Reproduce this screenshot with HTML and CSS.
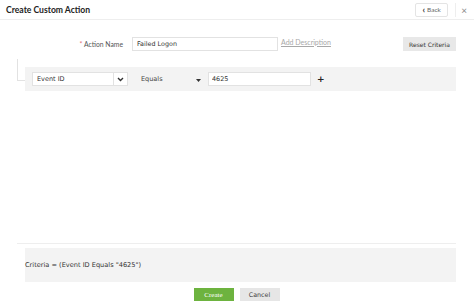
FILE: index.html
```
<!DOCTYPE html>
<html lang="en">
<head>
  <meta charset="UTF-8" />
  <title>Create Custom Action</title>
  <link rel="stylesheet" href="styles.css">
</head>
<body>
  <div class="page">
    <div class="header">
      <div class="title">Create Custom Action</div>
      <div class="header-actions">
        <button class="back-btn"><span class="chev">&#8249;</span> Back</button>
        <span class="divider"></span>
        <span class="close">&#215;</span>
      </div>
    </div>

    <div class="name-row">
      <label class="name-label"><span class="req">*</span> Action Name</label>
      <input class="name-input" type="text" value="Failed Logon" />
      <a class="add-desc" href="#">Add Description</a>
      <button class="reset-btn">Reset Criteria</button>
    </div>

    <div class="criteria">
      <div class="bracket"></div>
      <div class="crit-row">
        <div class="select">
          <span class="select-text">Event ID</span>
          <span class="select-arrow">
            <svg width="7" height="5" viewBox="0 0 7 5"><path d="M1 1 L3.5 3.5 L6 1" fill="none" stroke="#333" stroke-width="1.4"/></svg>
          </span>
        </div>
        <div class="op">
          <span>Equals</span>
          <svg width="5" height="3" viewBox="0 0 5 3"><path d="M0 0 L5 0 L2.5 3 Z" fill="#333"/></svg>
        </div>
        <input class="value-input" type="text" value="4625" />
        <span class="plus">+</span>
      </div>
    </div>

    <div class="summary">
      <div class="summary-box">Criteria = (Event ID Equals "4625")</div>
      <div class="buttons">
        <button class="create-btn">Create</button>
        <button class="cancel-btn">Cancel</button>
      </div>
    </div>
  </div>
</body>
</html>
```

FILE: styles.css
```
body {
  margin: 0;
  background: #fff;
  font-family: Lato, "Open Sans", sans-serif;
  color: #333;
}
.page {
  width: 474px;
  height: 306px;
  display: flex;
  flex-direction: column;
}

.header {
  height: 19px;
  border-bottom: 1px solid #eee;
  display: flex;
  align-items: center;
  justify-content: space-between;
  padding: 0 7px 0 6px;
}
.title {
  font-size: 8.6px;
  font-weight: bold;
  color: #222;
}
.header-actions {
  display: flex;
  align-items: center;
}
.back-btn {
  height: 14px;
  width: 33px;
  border: 1px solid #e4e4e4;
  border-radius: 2px;
  background: #fff;
  font-family: Lato, sans-serif;
  font-size: 6.5px;
  color: #666;
  padding: 0;
  display: flex;
  align-items: center;
  justify-content: center;
  gap: 2px;
}
.back-btn .chev {
  font-size: 9px;
  font-weight: bold;
  line-height: 1;
  color: #333;
  margin-top: -1px;
}
.divider {
  width: 1px;
  height: 14px;
  background: #eee;
  margin: 0 5px 0 7px;
}
.close {
  font-size: 10px;
  color: #888;
  line-height: 1;
}

.name-row {
  display: flex;
  align-items: center;
  margin-top: 17px;
  padding-right: 18px;
  height: 14px;
}
.name-label {
  width: 123px;
  text-align: right;
  font-size: 6.8px;
  color: #555;
}
.req {
  color: #e57373;
}
.name-input {
  margin-left: 9px;
  width: 146px;
  height: 14px;
  box-sizing: border-box;
  border: 1px solid #e2e2e2;
  padding: 0 4px;
  font-family: "DejaVu Sans", sans-serif;
  font-size: 6.4px;
  color: #333;
}
.add-desc {
  margin-left: 3px;
  font-size: 7px;
  color: #a8a8a8;
  text-decoration: underline;
  margin-top: -5px;
}
.reset-btn {
  margin-left: auto;
  width: 53px;
  height: 14px;
  border: none;
  background: #e8e8e8;
  font-family: "DejaVu Sans", sans-serif;
  font-size: 6px;
  color: #333;
  padding: 0;
}

.criteria {
  display: flex;
  align-items: flex-start;
  margin: 8px 18px 0 17px;
}
.bracket {
  width: 7px;
  height: 21px;
  border-left: 1px solid #e2e2e2;
  border-bottom: 1px solid #e2e2e2;
}
.crit-row {
  flex: 1;
  margin-top: 8px;
  height: 24px;
  background: #f3f3f3;
  display: flex;
  align-items: center;
  padding-left: 7px;
}
.select {
  width: 96px;
  height: 14px;
  box-sizing: border-box;
  border: 1px solid #e2e2e2;
  background: #fff;
  display: flex;
  align-items: center;
}
.select-text {
  flex: 1;
  padding-left: 4px;
  font-family: "DejaVu Sans", sans-serif;
  font-size: 6.5px;
  color: #333;
}
.select-arrow {
  width: 13px;
  height: 12px;
  border-left: 1px solid #e2e2e2;
  display: flex;
  align-items: center;
  justify-content: center;
}
.op {
  width: 60px;
  margin-left: 13px;
  display: flex;
  align-items: center;
  justify-content: space-between;
  font-family: "DejaVu Sans", sans-serif;
  font-size: 6.5px;
  color: #444;
}
.op svg {
  margin-top: 2px;
}
.value-input {
  margin-left: 7px;
  width: 103px;
  height: 14px;
  box-sizing: border-box;
  border: 1px solid #e2e2e2;
  padding: 0 3px;
  font-family: "DejaVu Sans", sans-serif;
  font-size: 6.4px;
  color: #333;
}
.plus {
  margin-left: 6px;
  font-family: "DejaVu Sans", sans-serif;
  font-size: 9px;
  font-weight: bold;
  color: #222;
}

.summary {
  margin-top: auto;
  padding: 0 18px 5px 17px;
}
.summary-box {
  border-top: 1px solid #eee;
  height: 39px;
  box-sizing: border-box;
  background: #f3f3f3;
  background-clip: content-box;
  padding: 4px 0 0 8px;
  display: flex;
  align-items: center;
  font-family: "DejaVu Sans", sans-serif;
  font-size: 6.6px;
  color: #333;
}
.buttons {
  display: flex;
  justify-content: center;
  gap: 6px;
  margin-top: 6px;
}
.create-btn,
.cancel-btn {
  width: 40px;
  height: 13px;
  border: none;
  padding: 0;
}
.create-btn {
  background: #6db33f;
  color: #fff;
  font-family: "Liberation Serif", serif;
  font-size: 7px;
}
.cancel-btn {
  background: #e6e6e6;
  color: #444;
  font-family: "DejaVu Sans", sans-serif;
  font-size: 6.4px;
}
```
